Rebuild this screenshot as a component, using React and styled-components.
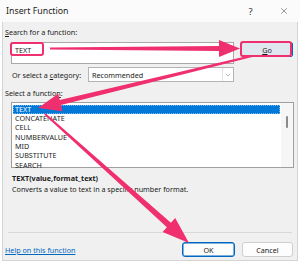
import React from "react";
import styled, { createGlobalStyle } from "styled-components";
import { X, ChevronDown } from "lucide-react";

const PINK = "#f0306e";

const Global = createGlobalStyle`
html, body { margin: 0; padding: 0; background: #ffffff; }
body {
  width: 300px;
  height: 264px;
  overflow: hidden;
  font-family: "Noto Sans", "Open Sans", sans-serif;
  color: #1b1b1b;
}
`;

const Dialog = styled.div`
position: relative;
width: 300px;
height: 261px;
display: flex;
flex-direction: column;
`;

const TitleBar = styled.div`
height: 22px;
display: flex;
align-items: center;
background: #fbfbfb;
padding-left: 6px;
font-size: 8.8px;
`;

const Title = styled.div`
flex: 1;
`;

const TitleBtn = styled.div`
width: 33px;
display: flex;
justify-content: center;
align-items: center;
font-size: 9.5px;
color: #333;
`;

const Body = styled.div`
flex: 1;
display: flex;
flex-direction: column;
margin: 0 2px;
padding: 0 4px 0 2px;
background: #f0f0f0;
border: 1px solid #d4d4d4;
border-top: none;
font-size: 7.2px;
`;

const Label = styled.div`
line-height: 10px;
margin-top: ${(p) => p.top || 0}px;
margin-left: ${(p) => p.left || 0}px;
width: ${(p) => (p.w ? p.w + "px" : "auto")};
flex-shrink: 0;
`;

const Key = styled.span`
text-decoration: underline;
`;

const SearchRow = styled.div`
display: flex;
margin-top: 5px;
margin-left: 6px;
gap: 7px;
align-items: flex-start;
`;

const SearchBox = styled.div`
position: relative;
width: 223px;
height: 22px;
box-sizing: border-box;
background: #ffffff;
border: 1px solid #a8a8a8;
padding: 3px 3px;
line-height: 8px;
`;

const Highlight = styled.div`
position: absolute;
left: ${(p) => p.x}px;
top: ${(p) => p.y}px;
width: ${(p) => p.w}px;
height: ${(p) => p.h}px;
box-sizing: border-box;
border: 2px solid ${PINK};
border-radius: 3px;
pointer-events: none;
`;

const GoButton = styled.div`
position: relative;
width: 52px;
height: 15px;
box-sizing: border-box;
display: flex;
justify-content: center;
align-items: center;
background: #e1e7ee;
border: 1px solid #0067c0;
border-radius: 2px;
`;

const CategoryRow = styled.div`
display: flex;
align-items: center;
margin-top: 3px;
height: 15px;
`;

const Select = styled.div`
width: 146px;
height: 15px;
box-sizing: border-box;
display: flex;
align-items: center;
background: #ffffff;
border: 1px solid #b4b4b4;
padding-left: 3px;
`;

const SelectText = styled.div`
flex: 1;
`;

const Chevron = styled.div`
width: 10px;
height: 13px;
display: flex;
align-items: center;
justify-content: center;
border-left: 1px solid #e2e2e2;
color: #666;
`;

const ListBox = styled.div`
margin-top: 4px;
margin-left: 6px;
width: 283px;
height: 66px;
box-sizing: border-box;
display: flex;
background: #ffffff;
border: 1px solid #a0a0a0;
`;

const Items = styled.div`
flex: 1;
padding: 1.5px 1px 0 1px;
`;

const Item = styled.div`
height: 9.35px;
line-height: 9.35px;
padding-left: 2px;
box-sizing: border-box;
background: ${(p) => (p.selected ? "#0078d7" : "transparent")};
color: ${(p) => (p.selected ? "#ffffff" : "#1b1b1b")};
outline: ${(p) => (p.selected ? "1px dotted #7ab7ee" : "none")};
outline-offset: -1px;
`;

const ScrollTrack = styled.div`
width: 12px;
background: #f6f6f6;
display: flex;
justify-content: center;
padding-top: 13px;
`;

const Thumb = styled.div`
width: 2px;
height: 12px;
border-radius: 1px;
background: #8a8a8a;
`;

const Syntax = styled.div`
margin-top: 5px;
margin-left: 7px;
line-height: 11px;
font-weight: 700;
`;

const Desc = styled.div`
margin-left: 7px;
line-height: 11px;
`;

const Footer = styled.div`
margin-top: auto;
padding-bottom: 3px;
`;

const Separator = styled.div`
height: 1px;
margin: 0 1px 0 3px;
background: #d9d9d9;
`;

const ButtonRow = styled.div`
display: flex;
align-items: center;
margin-top: 9px;
height: 15px;
gap: 7px;
`;

const HelpLink = styled.a`
flex: 1;
color: #0067c0;
text-decoration: underline;
cursor: pointer;
`;

const Button = styled.div`
width: ${(p) => p.w}px;
height: 15px;
box-sizing: border-box;
display: flex;
justify-content: center;
align-items: center;
background: #fdfdfd;
border: ${(p) => (p.primary ? "1px solid #0067c0" : "1px solid #cfcfcf")};
box-shadow: ${(p) => (p.primary ? "inset 0 0 0 0.5px #0067c0" : "none")};
border-radius: 3px;
`;

const Overlay = styled.svg`
position: absolute;
left: 0;
top: 0;
width: 300px;
height: 264px;
pointer-events: none;
`;

function arrowPoints(x1, y1, x2, y2, w1, w2, hl, hw) {
  const dx = x2 - x1;
  const dy = y2 - y1;
  const len = Math.hypot(dx, dy);
  const ux = dx / len;
  const uy = dy / len;
  const nx = -uy;
  const ny = ux;
  const bx = x2 - ux * hl;
  const by = y2 - uy * hl;
  const pts = [
    [x1 + (nx * w1) / 2, y1 + (ny * w1) / 2],
    [bx + (nx * w2) / 2, by + (ny * w2) / 2],
    [bx + nx * hw, by + ny * hw],
    [x2, y2],
    [bx - nx * hw, by - ny * hw],
    [bx - (nx * w2) / 2, by - (ny * w2) / 2],
    [x1 - (nx * w1) / 2, y1 - (ny * w1) / 2],
  ];
  return pts.map((p) => p[0].toFixed(1) + "," + p[1].toFixed(1)).join(" ");
}

const arrows = [
  [50, 48.5, 240, 48.5, 1.8, 5, 21, 8.5],
  [252, 56, 38, 108, 1.8, 5, 23, 9],
  [45, 114, 189, 243, 1.8, 6, 27, 9.5],
];

const functions = ["TEXT", "CONCATENATE", "CELL", "NUMBERVALUE", "MID", "SUBSTITUTE", "SEARCH"];

function App() {
  return (
    <>
      <Global />
      <Dialog>
        <TitleBar>
          <Title>Insert Function</Title>
          <TitleBtn>?</TitleBtn>
          <TitleBtn>
            <X size={10} strokeWidth={1.2} />
          </TitleBtn>
        </TitleBar>
        <Body>
          <Label top={5}>
            <Key>S</Key>earch for a function:
          </Label>
          <SearchRow>
            <SearchBox>
              TEXT
              <Highlight x={-2} y={-1} w={34} h={14} />
            </SearchBox>
            <GoButton>
              <span>
                <Key>G</Key>o
              </span>
              <Highlight x={-2} y={-2} w={52} h={16} />
            </GoButton>
          </SearchRow>
          <CategoryRow>
            <Label left={7} w={76}>
              Or select a <Key>c</Key>ategory:
            </Label>
            <Select>
              <SelectText>Recommended</SelectText>
              <Chevron>
                <ChevronDown size={8} strokeWidth={1.4} />
              </Chevron>
            </Select>
          </CategoryRow>
          <Label top={6}>
            Select a functio<Key>n</Key>:
          </Label>
          <ListBox>
            <Items>
              {functions.map((f, i) => (
                <Item key={f} selected={i === 0}>
                  {f}
                </Item>
              ))}
            </Items>
            <ScrollTrack>
              <Thumb />
            </ScrollTrack>
          </ListBox>
          <Syntax>TEXT(value,format_text)</Syntax>
          <Desc>Converts a value to text in a specific number format.</Desc>
          <Footer>
            <Separator />
            <ButtonRow>
              <HelpLink>Help on this function</HelpLink>
              <Button w={53} primary>
                OK
              </Button>
              <Button w={51}>Cancel</Button>
            </ButtonRow>
          </Footer>
        </Body>
        <Overlay viewBox="0 0 300 264">
          {arrows.map((a, i) => (
            <polygon key={i} points={arrowPoints(...a)} fill={PINK} />
          ))}
        </Overlay>
      </Dialog>
    </>
  );
}

export default App;
